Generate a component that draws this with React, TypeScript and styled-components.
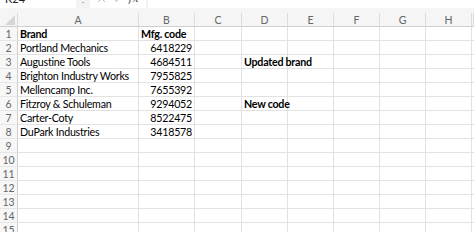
import React from "react";
import styled, { createGlobalStyle } from "styled-components";

const GlobalStyle = createGlobalStyle`
  html, body { margin: 0; padding: 0; background: #ffffff; overflow: hidden; }
  body { font-family: "Lato", "Liberation Sans", sans-serif; }
`;

const Page = styled.div`
  width: 474px;
  height: 232px;
  overflow: hidden;
  display: flex;
  flex-direction: column;
`;

const FormulaBar = styled.div`
  height: 20px;
  margin-top: -12px;
  display: flex;
  align-items: stretch;
  background: #f3f3f3;
  flex-shrink: 0;
`;

const NameBox = styled.div`
  width: 76px;
  background: #ffffff;
  display: flex;
  align-items: center;
  justify-content: space-between;
  padding: 0 4px 0 5px;
  box-sizing: border-box;
  font-size: 11px;
  color: #222;
`;

const Dots = styled.div`
  width: 14px;
  display: flex;
  align-items: center;
  justify-content: center;
  color: #777;
  font-size: 10px;
`;

const FxGroup = styled.div`
  width: 56px;
  margin-right: 2px;
  background: #ffffff;
  display: flex;
  align-items: center;
  justify-content: space-around;
  padding: 0 4px;
  box-sizing: border-box;
  color: #b8b8b8;
`;

const FxText = styled.span`
  font-family: "DejaVu Serif", serif;
  font-style: italic;
  font-size: 11px;
  color: #444;
`;

const FormulaInput = styled.div`
  flex: 1;
  background: #ffffff;
`;

const Gap = styled.div`
  height: 5px;
  background: #f5f5f5;
  flex-shrink: 0;
`;

const Grid = styled.div`
  display: grid;
  grid-template-columns: 18px 121px 56px 47px 46px 46px 46px 46px 46px 2px;
  grid-auto-rows: 14px;
`;

const ColHeader = styled.div`
  background: #f5f5f5;
  border-right: 1px solid #dcdcdc;
  border-bottom: 1px solid #cfcfcf;
  box-sizing: border-box;
  display: flex;
  align-items: center;
  justify-content: center;
  font-size: 10.5px;
  color: #666;
  position: relative;
`;

const Corner = styled.div`
  position: absolute;
  right: 2px;
  bottom: 1px;
  width: 0;
  height: 0;
  border-left: 10px solid transparent;
  border-bottom: 10px solid #d6d6d6;
`;

const RowHeader = styled.div`
  background: #f7f7f7;
  border-right: 1px solid #cfcfcf;
  border-bottom: 1px solid #e6e6e6;
  box-sizing: border-box;
  display: flex;
  align-items: center;
  justify-content: center;
  font-size: 10.5px;
  color: #666;
`;

const Cell = styled.div<{ $bold?: boolean; $num?: boolean }>`
  border-right: 1px solid #e2e2e2;
  border-bottom: 1px solid #e2e2e2;
  box-sizing: border-box;
  display: flex;
  align-items: center;
  justify-content: ${(p) => (p.$num ? "flex-end" : "flex-start")};
  padding: 0 2px;
  font-size: 10.7px;
  letter-spacing: -0.25px;
  font-weight: ${(p) => (p.$bold ? 700 : 400)};
  color: #000;
  white-space: nowrap;
  overflow: visible;
  min-width: 0;
`;

const cols = ["A", "B", "C", "D", "E", "F", "G", "H"];

type Row = { [k: string]: { v: string; bold?: boolean; num?: boolean } };

const data: Row[] = [
  { A: { v: "Brand", bold: true }, B: { v: "Mfg. code", bold: true } },
  { A: { v: "Portland Mechanics" }, B: { v: "6418229", num: true } },
  { A: { v: "Augustine Tools" }, B: { v: "4684511", num: true }, D: { v: "Updated brand", bold: true } },
  { A: { v: "Brighton Industry Works" }, B: { v: "7955825", num: true } },
  { A: { v: "Mellencamp Inc." }, B: { v: "7655392", num: true } },
  { A: { v: "Fitzroy & Schuleman" }, B: { v: "9294052", num: true }, D: { v: "New code", bold: true } },
  { A: { v: "Carter-Coty" }, B: { v: "8522475", num: true } },
  { A: { v: "DuPark Industries" }, B: { v: "3418578", num: true } },
];

const rowCount = 15;

export default function App() {
  return (
    <Page>
      <GlobalStyle />
      <FormulaBar>
        <NameBox>
          <span>K24</span>
          <svg width="7" height="5" viewBox="0 0 7 5">
            <path d="M0.5 0.8 L3.5 4 L6.5 0.8 Z" fill="#333" />
          </svg>
        </NameBox>
        <Dots>⋮</Dots>
        <FxGroup>
          <svg width="9" height="9" viewBox="0 0 9 9">
            <path d="M1 1 L8 8 M8 1 L1 8" stroke="#bdbdbd" strokeWidth="1" fill="none" />
          </svg>
          <svg width="9" height="9" viewBox="0 0 9 9">
            <path d="M1 4.5 L3.5 7.5 L8 1.5" stroke="#bdbdbd" strokeWidth="1" fill="none" />
          </svg>
          <FxText>fx</FxText>
        </FxGroup>
        <FormulaInput />
      </FormulaBar>
      <Gap />
      <Grid>
        <ColHeader>
          <Corner />
        </ColHeader>
        {cols.map((c) => (
          <ColHeader key={c}>{c}</ColHeader>
        ))}
        <ColHeader />
        {Array.from({ length: rowCount }, (_, i) => {
          const r = data[i] || {};
          return (
            <React.Fragment key={i}>
              <RowHeader>{i + 1}</RowHeader>
              {cols.map((c) => {
                const cell = r[c];
                return (
                  <Cell key={c} $bold={cell?.bold} $num={cell?.num}>
                    {cell?.v}
                  </Cell>
                );
              })}
              <Cell />
            </React.Fragment>
          );
        })}
      </Grid>
    </Page>
  );
}
